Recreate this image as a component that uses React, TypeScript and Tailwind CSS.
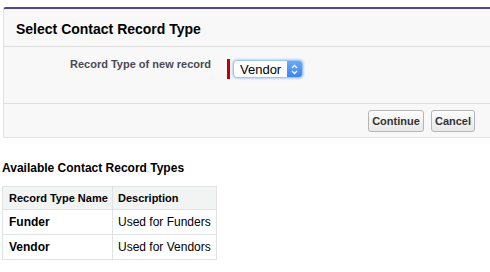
import React from "react";

export default function App() {
  return (
    <div className="w-[490px] h-[272px] bg-white overflow-hidden relative" style={{ fontFamily: '"Liberation Sans", Arial, sans-serif' }}>
      <div className="pt-[7px] pl-[3px]">
        <div className="w-[500px] bg-[#f8f8f8] border-t-2 border-t-[#54468c] border-l border-l-[#e0e3e5] border-b border-b-[#e0e3e5] rounded-tl-[3px]">
          <div className="h-[38px] flex items-center pl-[12px] border-b border-[#dddddd]">
            <span className="text-[14px] font-bold text-black leading-none pt-[2px]">Select Contact Record Type</span>
          </div>
          <div className="h-[57px] border-b border-[#dddddd] flex items-start">
            <div className="w-[207px] text-right pt-[12px] text-[11px] font-bold text-[#4a4a56] leading-none">Record Type of new record</div>
            <div className="ml-[16px] mt-[12px] flex items-center">
              <div className="w-[3px] h-[20px] bg-[#c00000]" />
              <div className="ml-[3px] h-[18px] w-[70px] rounded-[4px] bg-white border border-[#9fc6f5] shadow-[0_0_2px_1px_#b8d6fb] flex items-stretch overflow-hidden">
                <div className="flex-1 flex items-center pl-[6px] text-[13px] text-black leading-none">Vendor</div>
                <div className="w-[15px] bg-gradient-to-b from-[#6aa9f7] to-[#3d85f0] flex items-center justify-center">
                  <svg width="7" height="11" viewBox="0 0 7 11">
                    <path d="M1 4 L3.5 1.5 L6 4" fill="none" stroke="white" strokeWidth="1.3" />
                    <path d="M1 7 L3.5 9.5 L6 7" fill="none" stroke="white" strokeWidth="1.3" />
                  </svg>
                </div>
              </div>
            </div>
          </div>
          <div className="h-[33px] flex items-start pl-[364px] pt-[6px] gap-[7px]">
            <button className="h-[22px] w-[56px] rounded-[3px] border border-[#b5b5b5] bg-gradient-to-b from-[#fdfdfd] to-[#e8e8e8] text-[11px] font-bold text-[#333333] leading-none">Continue</button>
            <button className="h-[22px] w-[44px] rounded-[3px] border border-[#b5b5b5] bg-gradient-to-b from-[#fdfdfd] to-[#e8e8e8] text-[11px] font-bold text-[#333333] leading-none">Cancel</button>
          </div>
        </div>
      </div>
      <div className="pl-[2px] pt-[24px]">
        <div className="text-[12px] font-bold text-black leading-none">Available Contact Record Types</div>
        <table className="mt-[12px] border-collapse border border-[#e0e3e5] text-[12px] leading-none">
          <thead>
            <tr className="h-[23px] bg-[#f2f3f3]">
              <th className="w-[110px] text-left pl-[6px] border border-[#e0e3e5] font-bold text-[11px] text-black">Record Type Name</th>
              <th className="w-[104px] text-left pl-[5px] border border-[#e0e3e5] font-bold text-[11px] text-black">Description</th>
            </tr>
          </thead>
          <tbody>
            <tr className="h-[25px] bg-white">
              <td className="pl-[6px] border border-[#e0e3e5] font-bold text-black">Funder</td>
              <td className="pl-[5px] border border-[#e0e3e5] text-black">Used for Funders</td>
            </tr>
            <tr className="h-[25px] bg-white">
              <td className="pl-[6px] border border-[#e0e3e5] font-bold text-black">Vendor</td>
              <td className="pl-[5px] border border-[#e0e3e5] text-black">Used for Vendors</td>
            </tr>
          </tbody>
        </table>
      </div>
    </div>
  );
}
